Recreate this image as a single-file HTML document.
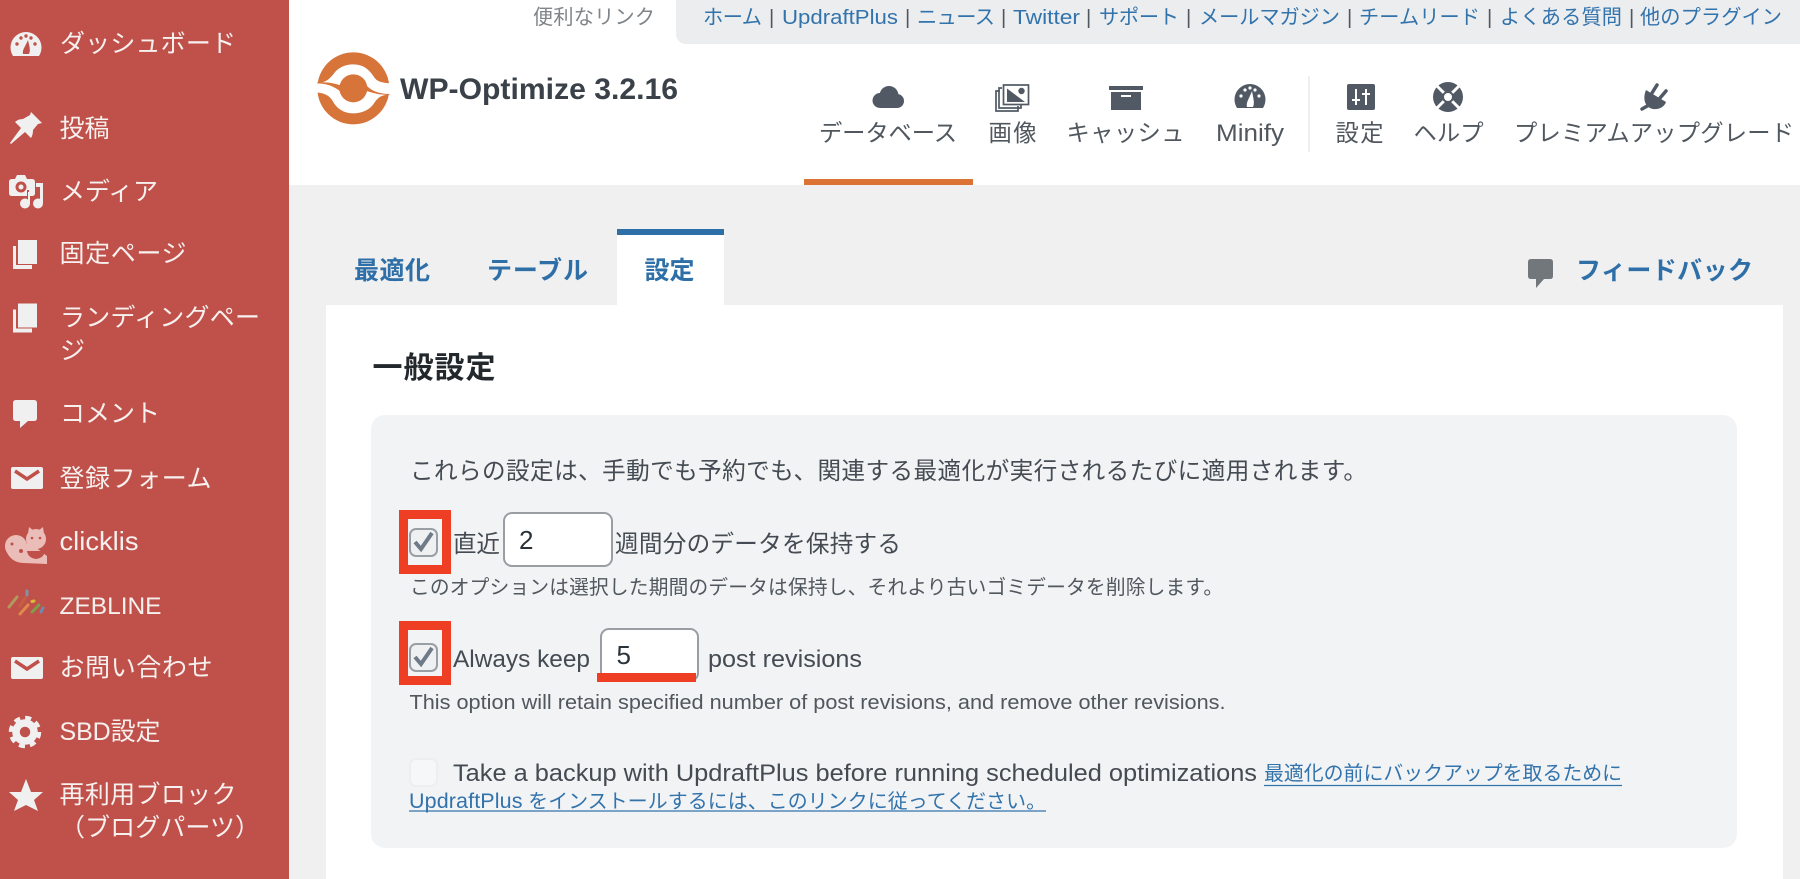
<!DOCTYPE html>
<html lang="ja"><head><meta charset="utf-8"><title>WP-Optimize</title>
<style>
html,body{margin:0;padding:0;width:1800px;height:879px;overflow:hidden;background:#f0f0f1}
.a{position:absolute}
svg{position:absolute;left:0;top:0;filter:blur(.3px)}
text{font-family:"Liberation Sans","Noto Sans CJK JP",sans-serif;white-space:pre}
.s text{fill:#f6f0ef;font-size:25px}
.l{font-size:20.2px;fill:#3273ac}
.p{font-size:20.2px;fill:#50575e}
.n{font-size:23.3px;fill:#50575e}
.t{font-size:25px;font-weight:700;fill:#2f6fa8}
.b{font-size:23.6px;fill:#444b52}
.d{font-size:19.7px;fill:#50575e}
.u{font-size:19.9px;fill:#3273ac}
</style></head><body>
<div class="a" style="left:0;top:0;width:289px;height:879px;background:#c0514a"></div>
<div class="a" style="left:289px;top:0;width:1511px;height:185px;background:#fff"></div>
<div class="a" style="left:676px;top:0;width:1124px;height:44px;background:#ebedef;border-bottom-left-radius:10px"></div>
<div class="a" style="left:804px;top:179px;width:169px;height:6px;background:#dc7233"></div>
<div class="a" style="left:1308px;top:76px;width:2px;height:76px;background:#eeeff0"></div>
<div class="a" style="left:326px;top:305px;width:1457px;height:574px;background:#fff"></div>
<div class="a" style="left:617px;top:229px;width:107px;height:6px;background:#2f6fa8"></div>
<div class="a" style="left:617px;top:235px;width:107px;height:72px;background:#fff"></div>
<div class="a" style="left:371px;top:415px;width:1366px;height:433px;background:#f2f3f5;border-radius:14px"></div>

<div class="a" style="left:399px;top:510px;width:34px;height:46px;border:9px solid #ee3e23"></div>
<div class="a" style="left:399px;top:621px;width:34px;height:46px;border:9px solid #ee3e23"></div>
<div class="a" style="left:409px;top:528px;width:25px;height:25px;border:2px solid #9a9fa5;border-radius:7px;background:#eef0f2"></div>
<div class="a" style="left:409px;top:643px;width:25px;height:25px;border:2px solid #9a9fa5;border-radius:7px;background:#eef0f2"></div>
<div class="a" style="left:409px;top:758px;width:25px;height:25px;border:2px solid #edeef0;border-radius:7px;background:#f6f7f8"></div>
<div class="a" style="left:503px;top:512px;width:106px;height:51px;border:2px solid #9a9ea3;border-radius:9px;background:#fff"></div>
<div class="a" style="left:600px;top:628px;width:95px;height:50px;border:2px solid #9a9ea3;border-radius:9px;background:#fff"></div>
<div class="a" style="left:597px;top:673px;width:99px;height:9px;background:#ee3e23"></div>

<svg width="1800" height="879" viewBox="0 0 1800 879" xmlns="http://www.w3.org/2000/svg">
<!-- sidebar icons -->
<g fill="#f1f0f0">
<path d="M13 56A15.500 15.500 0 1 1 39 56Z"/>
<g fill="#c0514a"><circle cx="17" cy="44" r="1.700"/><circle cx="21" cy="38" r="1.700"/><circle cx="26" cy="36" r="1.700"/><circle cx="31" cy="38" r="1.700"/><circle cx="35" cy="44" r="1.700"/><path d="M23 54C22 50 25 47 28 40C29 45 31 50 29 54Z"/></g>
<path d="M31 112L42 123L38 124L33 130Q33 135 31 138L25 132L11 144L10 143L21 128L15 122Q18 119 23 119L30 115Z"/>
<path d="M12 179H15L17 175H25L27 179H32Q35 179 35 182V193Q35 196 32 196H12Q9 196 9 193V182Q9 179 12 179Z"/>
<circle cx="21" cy="187" r="5.500" fill="#c0514a"/><circle cx="21" cy="187" r="2.500"/>
<path d="M18 197H37V208H18Z" fill="#c0514a"/>
<path d="M27 197V190H29V197Z" fill="#c0514a"/>
<circle cx="25" cy="203.500" r="5"/><circle cx="38" cy="203.500" r="5"/>
<path d="M28 192V203H30V192ZM36 183H43V203H40V187H36Z"/>
<path d="M13 246H16V265H32V269H13Z"/><rect x="18" y="240" width="19" height="24"/>
<g transform="translate(0,63.500)"><path d="M13 246H16V265H32V269H13Z"/><rect x="18" y="240" width="19" height="24"/></g>
<path d="M16 400H34Q37 400 37 403V418Q37 421 34 421H28L20 428V421H16Q13 421 13 418V403Q13 400 16 400Z"/>
<rect x="11" y="467" width="32" height="22" rx="2"/>
<path d="M15 471L27 479L39 471" fill="none" stroke="#c0514a" stroke-width="3.500"/>
<rect x="11" y="657" width="32" height="22" rx="2"/>
<path d="M15 661L27 669L39 661" fill="none" stroke="#c0514a" stroke-width="3.500"/>
<circle cx="25" cy="732" r="9" fill="none" stroke="#f1f0f0" stroke-width="7.500"/>
<circle cx="25" cy="732" r="14" fill="none" stroke="#f1f0f0" stroke-width="4.500" stroke-dasharray="6 5"/>
<path d="M26 779L31 792L43 792L34 800L38 811L26 805L14 811L18 800L9 792L21 792Z"/>
</g>
<g fill="#ebbdb9">
<circle cx="16" cy="546" r="11"/><path d="M5 548Q10 563 24 563L47 564V556L30 543Z"/>
<circle cx="36" cy="539" r="10"/><path d="M28 534L29 527L34 531H38L43 527L44 534Z"/>
<path d="M27 551H45Q44 558 36 559Q28 558 27 551Z" fill="#c0514a"/>
<circle cx="32" cy="538" r="1.300" fill="#c0514a"/><circle cx="40" cy="538" r="1.300" fill="#c0514a"/>
<circle cx="21" cy="551" r="2" fill="#c0514a"/><circle cx="12" cy="544" r="1.500" fill="#c0514a"/>
</g>
<g fill="none" stroke-width="3" stroke-linecap="round">
<path d="M9 607L17 597" stroke="#b09a60"/><path d="M27 591V595" stroke="#8590a5"/>
<path d="M20 606L25 598" stroke="#c5603f"/><path d="M20 614L28 605" stroke="#df8a4a"/>
<path d="M32 601.500L34 601" stroke="#d8b93a"/><path d="M32 612L39 605" stroke="#7f9e4a"/>
<path d="M41 612L43 608" stroke="#6d8bb0"/>
</g>
<!-- sidebar text -->
<g class="s">
<text x="60" y="52" textLength="176">ダッシュボード</text>
<text x="59.500" y="137" textLength="50">投稿</text>
<text x="60" y="200" textLength="98">メディア</text>
<text x="59.500" y="262" textLength="127">固定ページ</text>
<text x="60" y="326" textLength="200">ランディングペー</text>
<text x="60" y="359">ジ</text>
<text x="60" y="422" textLength="100">コメント</text>
<text x="59.500" y="487" textLength="152">登録フォーム</text>
<text x="59.500" y="550" textLength="79" lengthAdjust="spacingAndGlyphs" style="font-size:26px">clicklis</text>
<text x="59.500" y="614" textLength="102" lengthAdjust="spacingAndGlyphs" style="font-size:24.500px">ZEBLINE</text>
<text x="59.500" y="676" textLength="153">お問い合わせ</text>
<text x="59.500" y="740" textLength="101"><tspan style="font-size:25px">SBD</tspan>設定</text>
<text x="59.500" y="803" textLength="177">再利用ブロック</text>
<text x="60" y="836" textLength="200">（ブログパーツ）</text>
</g>
<!-- logo -->
<g transform="translate(310,45) scale(.3333)">
<circle cx="130" cy="130" r="108" fill="#d6743a"/>
<path d="M10 115C45 115 55 105 70 88C85 65 110 58 130 58C165 58 182 80 195 100C205 112 225 115 250 115V148C215 148 205 155 190 178C175 198 150 205 130 205C100 205 80 190 68 168C58 150 40 142 10 142Z" fill="#fff"/>
<circle cx="130" cy="130" r="42" fill="#d6743a"/>
<path d="M22 112C55 110 78 116 95 122L92 140C75 126 55 116 22 115ZM238 150C205 150 185 142 168 138L170 122C185 138 205 146 238 147Z" fill="#d6743a"/>
</g>
<text x="400" y="99" textLength="278" lengthAdjust="spacingAndGlyphs" style="font-size:30px;font-weight:700;fill:#3a4149">WP-Optimize 3.2.16</text>
<!-- top links -->
<text class="p" x="533" y="24" textLength="122" style="fill:#80858a">便利なリンク</text>
<text class="l" x="703" y="24" textLength="59">ホーム</text><text class="p" x="769" y="24">|</text>
<text class="l" x="782" y="24" textLength="116" lengthAdjust="spacingAndGlyphs">UpdraftPlus</text><text class="p" x="905" y="24">|</text>
<text class="l" x="917" y="24" textLength="78">ニュース</text><text class="p" x="1001" y="24">|</text>
<text class="l" x="1013" y="24" textLength="67" lengthAdjust="spacingAndGlyphs">Twitter</text><text class="p" x="1086" y="24">|</text>
<text class="l" x="1099" y="24" textLength="80">サポート</text><text class="p" x="1186" y="24">|</text>
<text class="l" x="1199" y="24" textLength="141">メールマガジン</text><text class="p" x="1347" y="24">|</text>
<text class="l" x="1359" y="24" textLength="121">チームリード</text><text class="p" x="1487" y="24">|</text>
<text class="l" x="1500" y="24" textLength="122">よくある質問</text><text class="p" x="1629" y="24">|</text>
<text class="l" x="1640" y="24" textLength="142">他のプラグイン</text>
<!-- nav icons -->
<g fill="#515964">
<circle cx="880" cy="100.500" r="7.500"/><circle cx="889" cy="95.500" r="9.500"/><circle cx="897" cy="101" r="7"/><rect x="880" y="100" width="17" height="8"/>
<g fill="none" stroke="#515964" stroke-width="1.700">
<path d="M1000 91H996V111H1018V106"/><path d="M1002 88H999V108H1021V104.500"/><rect x="1003.500" y="85" width="25" height="19.500"/>
</g>
<path d="M1007 88.500L1025 102H1007Z"/><circle cx="1021.500" cy="91" r="3.200"/>
<rect x="1109" y="86" width="34" height="4"/>
<path d="M1111 92H1141V110H1111ZM1121 95V97H1131V95Z" fill-rule="evenodd"/>
<path d="M1237 108A15.500 15.500 0 1 1 1263 108Z"/>
<g fill="#fff"><circle cx="1241" cy="96" r="1.600"/><circle cx="1245" cy="90" r="1.600"/><circle cx="1255" cy="90" r="1.600"/><circle cx="1259" cy="96" r="1.600"/><circle cx="1250" cy="88" r="1.600"/><path d="M1247 107C1246 102 1249 99 1252 91C1253 97 1255 103 1253 107Z"/></g>
<rect x="1347" y="84" width="28" height="26" rx="2"/>
<path d="M1356 89V105M1352 100H1360M1366 89V105M1362 94H1370" stroke="#fff" stroke-width="2" fill="none"/>
<circle cx="1448" cy="97" r="15"/>
<path d="M1437 86L1459 108M1459 86L1437 108" stroke="#fff" stroke-width="3"/>
<circle cx="1448" cy="97" r="6" fill="#515964"/><circle cx="1448" cy="97" r="4" fill="#fff"/>
<path d="M1646 90L1666 102C1664 108 1656 111 1650 108C1644 105 1643 97 1646 90Z"/>
<path d="M1649 105L1642 109M1652 93L1657 85M1660 98L1666 91" stroke="#515964" stroke-width="3.500" stroke-linecap="round" fill="none"/>
</g>
<!-- nav labels -->
<text class="n" x="819" y="141" textLength="138">データベース</text>
<text class="n" x="988.500" y="141" textLength="48">画像</text>
<text class="n" x="1066.500" y="141" textLength="118">キャッシュ</text>
<text class="n" x="1216" y="141" textLength="68" lengthAdjust="spacingAndGlyphs" style="font-size:24px">Minify</text>
<text class="n" x="1335.500" y="141" textLength="48">設定</text>
<text class="n" x="1413.500" y="141" textLength="70">ヘルプ</text>
<text class="n" x="1514" y="141" textLength="280">プレミアムアップグレード</text>
<!-- tabs -->
<text class="t" x="354" y="279" textLength="76">最適化</text>
<text class="t" x="487" y="279" textLength="101">テーブル</text>
<text class="t" x="644.500" y="279" textLength="50">設定</text>
<text class="t" x="1576" y="279" textLength="177">フィードバック</text>
<path d="M1531 259H1550Q1553 259 1553 262V276Q1553 279 1550 279H1544L1536 288V279H1531Q1528 279 1528 276V262Q1528 259 1531 259Z" fill="#72777c"/>
<text x="372.500" y="378" textLength="123" style="font-size:30px;font-weight:700;fill:#23282d">一般設定</text>
<text class="b" x="410" y="479" textLength="957">これらの設定は、手動でも予約でも、関連する最適化が実行されるたびに適用されます。</text>
<path d="M415 542L421 549L432 533M415 657L421 664L432 648" fill="none" stroke="#6e7a87" stroke-width="4"/>
<text class="b" x="453" y="552" textLength="47">直近</text>
<text x="519" y="549" style="font-size:26px;fill:#2c3338">2</text>
<text class="b" x="615" y="552" textLength="286">週間分のデータを保持する</text>
<text class="d" x="410" y="594" textLength="813">このオプションは選択した期間のデータは保持し、それより古いゴミデータを削除します。</text>
<text class="b" x="453" y="667" textLength="137" lengthAdjust="spacingAndGlyphs" style="font-size:24px">Always keep</text>
<text x="616.500" y="664" style="font-size:26px;fill:#2c3338">5</text>
<text class="b" x="708" y="667" textLength="154" lengthAdjust="spacingAndGlyphs" style="font-size:24px">post revisions</text>
<text class="d" x="409.500" y="709" textLength="816" lengthAdjust="spacingAndGlyphs" style="font-size:20px">This option will retain specified number of post revisions, and remove other revisions.</text>
<text class="b" x="453" y="781" textLength="804" lengthAdjust="spacingAndGlyphs" style="font-size:24px">Take a backup with UpdraftPlus before running scheduled optimizations</text>
<text class="u" x="1264" y="780" textLength="358">最適化の前にバックアップを取るために</text>
<path d="M1264 785.500H1622M409 811H1046" stroke="#3273ac" stroke-width="1.300"/>
<text class="u" x="409" y="808" textLength="637"><tspan style="font-size:21.500px">UpdraftPlus</tspan> をインストールするには、このリンクに従ってください。</text>
</svg>
</body></html>
